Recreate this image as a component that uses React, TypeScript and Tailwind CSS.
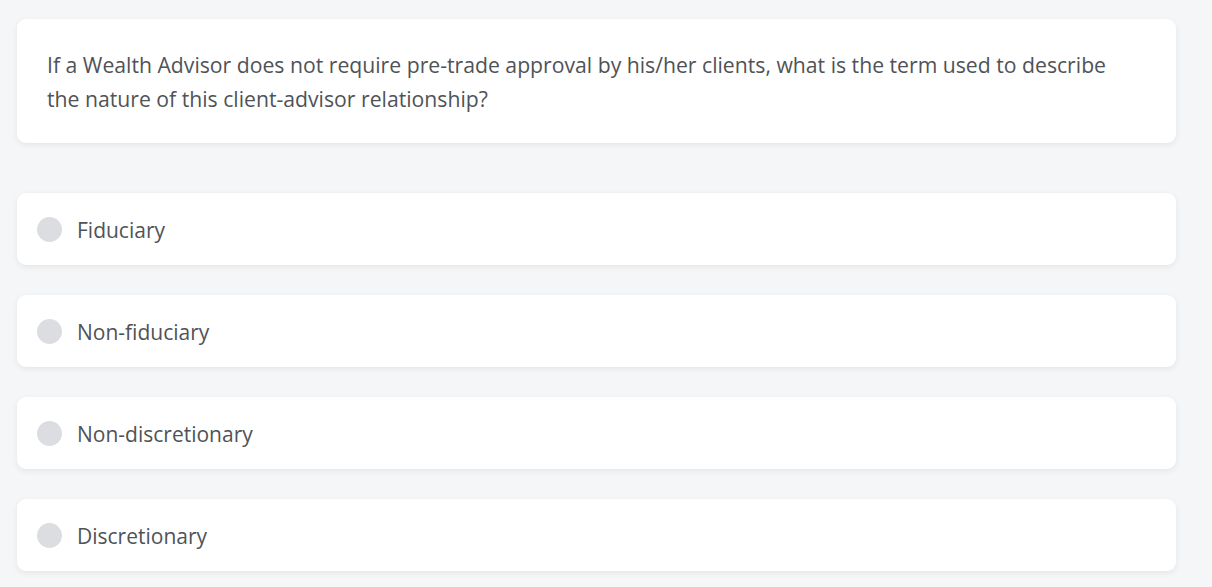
const options = ["Fiduciary", "Non-fiduciary", "Non-discretionary", "Discretionary"];

export default function App() {
  return (
    <div
      className="min-h-[587px] bg-[#f5f6f8] pt-[19px] pl-[17px]"
      style={{ fontFamily: '"Open Sans", "Noto Sans", sans-serif' }}
    >
      <div className="w-[1159px]">
        <div className="rounded-[9px] bg-white pl-[30px] pr-[56px] pt-[29px] pb-[27px] shadow-[0_2px_6px_rgba(0,0,0,0.07)]">
          <p className="text-[21.2px] leading-[34px] text-[#4f5357]">
            If a Wealth Advisor does not require pre-trade approval by his/her clients, what is the term used to describe the nature of this client-advisor relationship?
          </p>
        </div>

        <div className="mt-[50px] flex flex-col gap-[30px]">
          {options.map((opt) => (
            <label
              key={opt}
              className="flex h-[72px] cursor-pointer items-center gap-[15px] rounded-[9px] bg-white px-[20px] shadow-[0_2px_6px_rgba(0,0,0,0.07)]"
            >
              <span className="h-[25px] w-[25px] shrink-0 rounded-full bg-[#dcdde0]" />
              <span className="pt-[3px] text-[21px] text-[#4f5357]">{opt}</span>
            </label>
          ))}
        </div>
      </div>
    </div>
  );
}
